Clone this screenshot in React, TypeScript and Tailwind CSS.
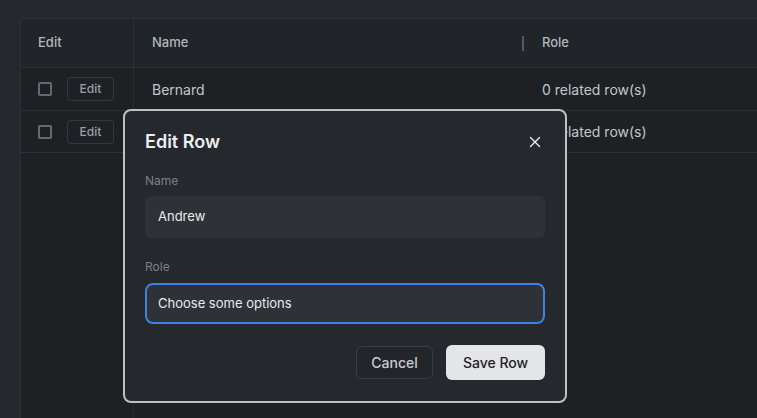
import { X } from "lucide-react";

const rows = [
  { name: "Bernard", role: "0 related row(s)" },
  { name: "Andrew", role: "0 related row(s)" },
];

function EditModal() {
  return (
    <div className="absolute left-[123px] top-[109px] w-[444px] h-[294px] rounded-lg border-2 border-[#bcc1c8] bg-[#25282c] px-[20px] pt-[20px] pb-[21px] flex flex-col">
      <div className="flex items-center justify-between h-[22px]">
        <h2 className="text-[18px] leading-[22px] font-semibold text-[#eceef0]">Edit Row</h2>
        <X className="w-[18px] h-[18px] text-[#eceef0] mr-[1px]" strokeWidth={1.8} />
      </div>

      <label className="mt-[20px] text-[12px] leading-[16px] text-[#7c8086]">Name</label>
      <div className="mt-[7px] h-[42px] rounded-md bg-[#2e3237] flex items-center px-[13px] text-[13px] text-[#e8eaec]">
        Andrew
      </div>

      <label className="mt-[21px] text-[12px] leading-[16px] text-[#7c8086]">Role</label>
      <div className="mt-[8px] h-[41px] rounded-lg border-2 border-[#3f80e4] bg-[#2e3237] flex items-center px-[11px] text-[13px] text-[#e8eaec]">
        Choose some options
      </div>

      <div className="mt-[21px] flex justify-end items-center gap-[13px]">
        <button className="h-[33px] w-[77px] rounded-md border border-[#3a3d42] bg-[#222529] text-[14px] font-medium text-[#c9ccd0]">
          Cancel
        </button>
        <button className="h-[35px] w-[99px] rounded-md bg-[#e3e5e8] text-[14px] font-medium text-[#1f2226]">
          Save Row
        </button>
      </div>
    </div>
  );
}

export default function App() {
  return (
    <div
      className="relative w-[757px] h-[418px] overflow-hidden bg-[#25282c] pt-[18px] pl-[20px]"
      style={{ fontFamily: "Inter, 'Noto Sans', sans-serif" }}
    >
      <div className="h-full bg-[#1e2124] border-l border-t border-[#2d3034]">
        {/* header */}
        <div className="flex h-[49px] bg-[#212428] border-b border-[#2d3034] text-[13px] font-medium text-[#b3b6bb]">
          <div className="w-[113px] border-r border-[#2d3034] flex items-center pl-[17px]">Edit</div>
          <div className="w-[391px] flex items-center pl-[18px] relative">
            Name
            <span className="absolute right-[1px] top-[17px] h-[15px] w-[2px] bg-[#55585d]" />
          </div>
          <div className="flex-1 flex items-center pl-[17px]">Role</div>
        </div>
        {rows.map((r, i) => (
          <div key={i} className={`flex ${i === 0 ? "h-[43px]" : "h-[42px]"} border-b border-[#2d3034] text-[14px] text-[#c3c6ca]`}>
            <div className="w-[113px] border-r border-[#2d3034] flex items-center pl-[17px] gap-[15px]">
              <span className="w-[14px] h-[14px] rounded-[2px] border-2 border-[#66696e]" />
              <button className="h-[24px] w-[47px] rounded border border-[#34373b] text-[12px] font-medium text-[#9c9fa4]">
                Edit
              </button>
            </div>
            <div className="w-[391px] flex items-center pl-[18px]">{r.name}</div>
            <div className="flex-1 flex items-center pl-[17px]">{r.role}</div>
          </div>
        ))}
        <div className="flex h-full">
          <div className="w-[113px] border-r border-[#26292c]" />
        </div>
      </div>
      <EditModal />
    </div>
  );
}
